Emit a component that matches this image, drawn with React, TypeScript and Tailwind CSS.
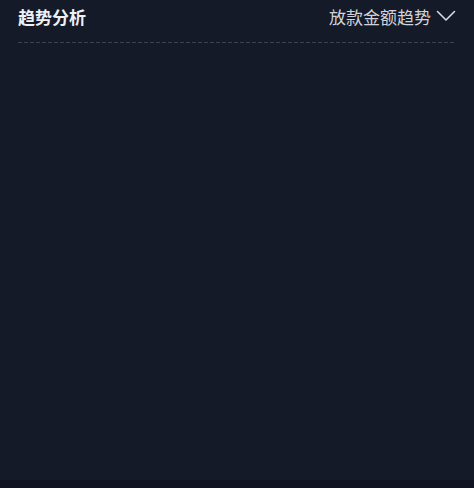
export default function App() {
  return (
    <div
      className="flex h-[488px] w-[474px] flex-col bg-[#141a28] text-[#e5e7eb]"
      style={{ fontFamily: '"Noto Sans CJK SC", "Noto Sans", sans-serif' }}
    >
      <div className="flex-1 px-[18px]">
        <div className="flex h-[34px] items-center justify-between pb-[2px]">
          <h2 className="text-[17px] font-bold leading-none text-[#eef0f4]">趋势分析</h2>
          <button className="flex items-center gap-[5px] text-[17px] leading-none text-[#cfd3db]">
            放款金额趋势
            <svg width="20" height="12" viewBox="0 0 20 12" fill="none" stroke="#d6d9e0" strokeWidth="1.6" strokeLinecap="round" strokeLinejoin="round">
              <path d="M1.5 1.5 L10 10 L18.5 1.5" />
            </svg>
          </button>
        </div>
        <div className="mt-[8px] h-px bg-[repeating-linear-gradient(to_right,#3b4252_0px,#3b4252_4px,transparent_4px,transparent_6px)]" />
      </div>
      <div className="h-[8px] bg-[#0f1322]" />
    </div>
  )
}
